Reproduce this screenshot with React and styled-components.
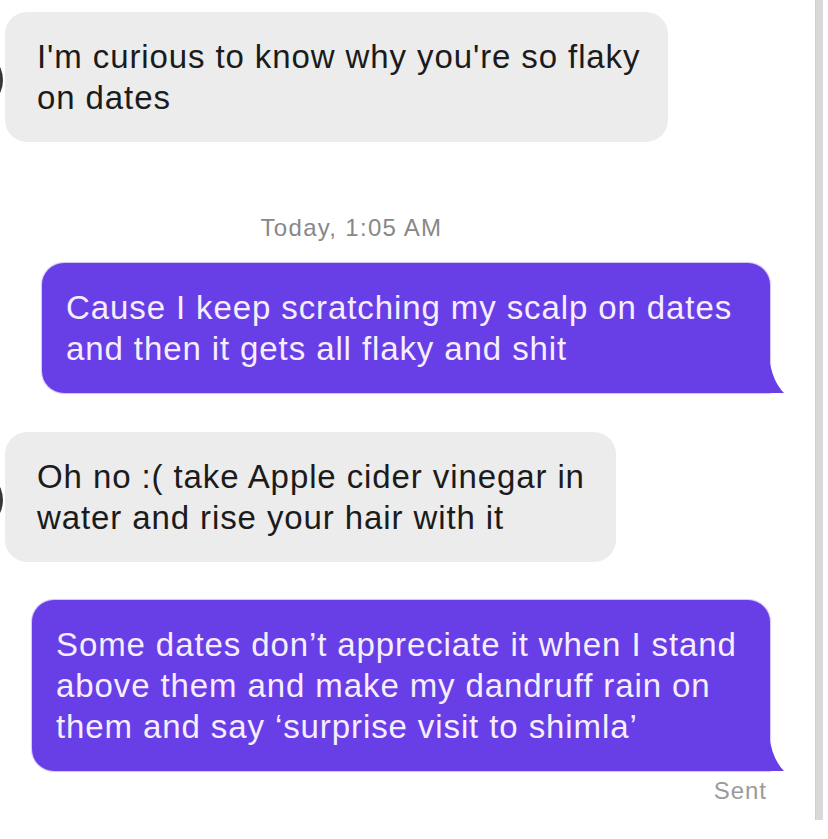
import React from "react";
import styled, { createGlobalStyle } from "styled-components";

const GlobalStyle = createGlobalStyle`
  * { box-sizing: border-box; }
  html, body { margin: 0; padding: 0; background: #ffffff; }
  body { font-family: "Liberation Sans", Arial, sans-serif; }
`;

const PURPLE = "#683fe7";

const Page = styled.div`
  display: flex;
  align-items: flex-start;
  width: 828px;
  min-height: 839px;
  background: #ffffff;
  overflow: hidden;
`;

const Thread = styled.div`
  width: 815px;
  display: flex;
  flex-direction: column;
  padding-top: 12px;
`;

const Rail = styled.div`
  width: 8px;
  height: 820px;
  background: #d9d9d9;
  border-left: 1px solid #cfcfcf;
  box-shadow: -6px 0 4px -4px #f2f2f2;
`;

const IncomingRow = styled.div`
  display: flex;
  align-items: flex-end;
  gap: 2px;
  margin-top: ${(p) => p.$gap || 0}px;
`;

const Avatar = styled.div`
  flex: none;
  width: 60px;
  height: 60px;
  margin-left: -57px;
  margin-bottom: 32px;
  border-radius: 50%;
  background: #3a3634;
`;

const OutgoingRow = styled.div`
  display: flex;
  justify-content: flex-end;
  padding-right: 45px;
  margin-top: ${(p) => p.$gap || 0}px;
`;

const Bubble = styled.div`
  position: relative;
  width: ${(p) => p.$width}px;
  font-size: 33px;
  line-height: 41px;
  letter-spacing: 0.9px;
  white-space: pre;
  padding: 24px 28px 24px ${(p) => (p.$mine ? 24 : 32)}px;
  border-radius: 22px;
  background: ${(p) => (p.$mine ? PURPLE : "#ececec")};
  color: ${(p) => (p.$mine ? "#f6eeff" : "#1b1b1b")};
  ${(p) =>
    p.$mine &&
    `
    border-bottom-right-radius: 0;
    box-shadow: 0 0 1px 1px rgba(120, 86, 235, 0.35);
    &::after {
      content: "";
      position: absolute;
      right: -14px;
      bottom: 0;
      width: 15px;
      height: 36px;
      background: ${PURPLE};
      clip-path: path("M0 0 Q3 24 15 36 L0 36 Z");
    }
  `}
`;

const Timestamp = styled.div`
  margin-top: 72px;
  padding-right: 112px;
  text-align: center;
  font-size: 24px;
  line-height: 28px;
  letter-spacing: 1.3px;
  color: #888888;
`;

const Status = styled.div`
  margin-top: 6px;
  padding-right: 48px;
  text-align: right;
  font-size: 24px;
  line-height: 28px;
  letter-spacing: 1px;
  color: #9a9a9a;
`;

const messages = [
  {
    kind: "in",
    width: 663,
    gap: 0,
    text: "I'm curious to know why you're so flaky\non dates",
  },
  { kind: "time", text: "Today, 1:05 AM" },
  {
    kind: "out",
    width: 728,
    gap: 21,
    text: "Cause I keep scratching my scalp on dates\nand then it gets all flaky and shit",
  },
  {
    kind: "in",
    width: 611,
    gap: 39,
    text: "Oh no :( take Apple cider vinegar in\nwater and rise your hair with it",
  },
  {
    kind: "out",
    width: 738,
    gap: 38,
    text: "Some dates don\u2019t appreciate it when I stand\nabove them and make my dandruff rain on\nthem and say \u2018surprise visit to shimla\u2019",
  },
];

export default function App() {
  return (
    <>
      <GlobalStyle />
      <Page>
        <Thread>
          {messages.map((m, i) => {
            if (m.kind === "time") return <Timestamp key={i}>{m.text}</Timestamp>;
            if (m.kind === "in")
              return (
                <IncomingRow key={i} $gap={m.gap}>
                  <Avatar />
                  <Bubble $width={m.width}>{m.text}</Bubble>
                </IncomingRow>
              );
            return (
              <OutgoingRow key={i} $gap={m.gap}>
                <Bubble $mine $width={m.width}>
                  {m.text}
                </Bubble>
              </OutgoingRow>
            );
          })}
          <Status>Sent</Status>
        </Thread>
        <Rail />
      </Page>
    </>
  );
}
